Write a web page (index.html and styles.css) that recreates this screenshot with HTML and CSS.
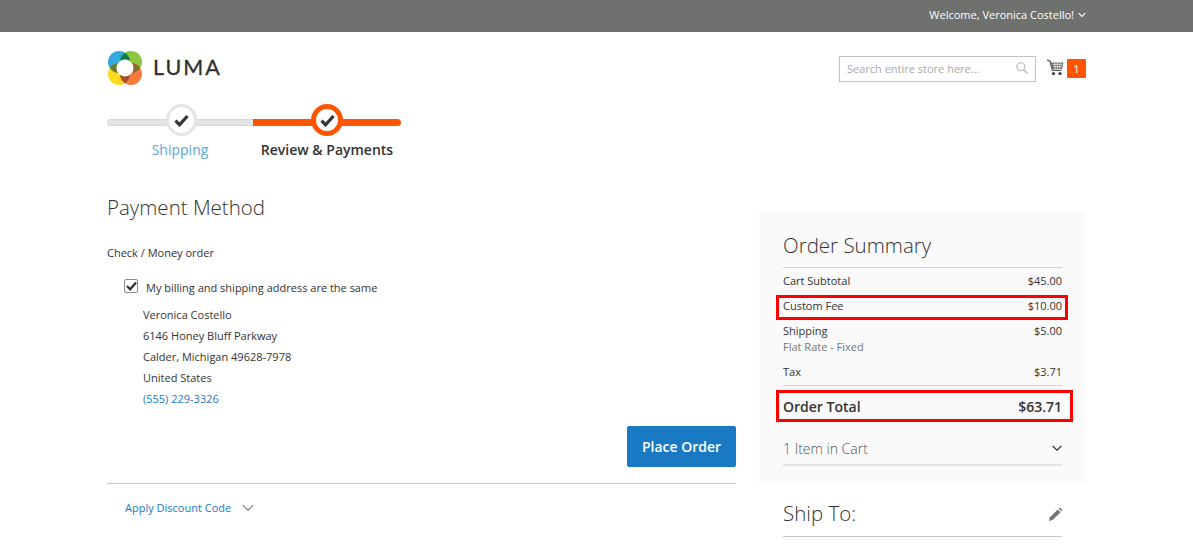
FILE: index.html
```html
<!DOCTYPE html>
<html lang="en">
<head>
<meta charset="utf-8">
<title>Checkout</title>
<link rel="stylesheet" href="styles.css">
</head>
<body>
<div class="topbar"><span class="welcome">Welcome, Veronica Costello!</span>
<svg class="welcome-caret" width="8" height="6" viewBox="0 0 8 6"><path d="M.7 1.200 4 4.400l3.300-3.200" fill="none" stroke="#fff" stroke-width="1.100"/></svg></div>
<header class="header">
  <div class="logo">
    <svg width="34" height="34" viewBox="0 0 34 34">
      <circle cx="11" cy="11" r="11" fill="#33a9e0"/>
      <circle cx="23" cy="11" r="11" fill="#8cc63f"/>
      <circle cx="11" cy="23" r="11" fill="#fbdc1e"/>
      <circle cx="23" cy="23" r="11" fill="#f97b3c"/>
      <path d="M17 1.780A11 11 0 0 1 17 20.220 11 11 0 0 1 17 1.780Z" fill="#0e7d45"/>
      <path d="M17 13.780A11 11 0 0 1 17 32.220 11 11 0 0 1 17 13.780Z" fill="#a3502a"/>
      <path d="M1.780 17A11 11 0 0 1 20.220 17 11 11 0 0 1 1.780 17Z" fill="#6b7a33"/>
      <path d="M13.780 17A11 11 0 0 1 32.220 17 11 11 0 0 1 13.780 17Z" fill="#8a6b33"/>
      <circle cx="17" cy="17" r="8.500" fill="#fff"/>
    </svg>
    <span class="logo-text">LUMA</span>
  </div>
  <div class="header-tools">
    <div class="search"><span>Search entire store here...</span>
      <svg width="12" height="12" viewBox="0 0 12 12"><circle cx="4.800" cy="4.800" r="4" fill="none" stroke="#b5b5b5" stroke-width="1.100"/><path d="m7.800 7.800 3.700 3.700" stroke="#b5b5b5" stroke-width="1.500"/></svg>
    </div>
    <div class="cart">
      <svg width="17" height="17" viewBox="0 0 17 17"><path d="M0 1.200 3 2l2.400 9.400h9.200" fill="none" stroke="#55585a" stroke-width="1.300"/><path d="M3.900 3.600h12.600l-1.500 6.400H5.300Z" fill="#6d7072"/><path d="M5.500 5.400h10M6 7.600h9M7.700 3.600l.6 6.400M10.400 3.600v6.400M13.100 3.600l-.6 6.400" stroke="#fff" stroke-width=".6"/><circle cx="6.500" cy="14.600" r="1.700" fill="#44484a"/><circle cx="13" cy="14.600" r="1.700" fill="#44484a"/></svg>
      <span class="counter">1</span>
    </div>
  </div>
</header>
<ul class="steps">
  <li class="step step-done">
    <span class="step-dot"><svg width="15" height="13" viewBox="0 0 14 12"><path d="M1.400 6.200 5.200 10 12.600 1.800" fill="none" stroke="#333" stroke-width="3"/></svg></span>
    <span class="step-label">Shipping</span>
  </li>
  <li class="step step-active">
    <span class="step-dot"><svg width="15" height="13" viewBox="0 0 14 12"><path d="M1.400 6.200 5.200 10 12.600 1.800" fill="none" stroke="#333" stroke-width="3"/></svg></span>
    <span class="step-label">Review &amp; Payments</span>
  </li>
</ul>
<main class="checkout">
  <section class="payment">
    <h2 class="payment-title">Payment Method</h2>
    <div class="method">Check / Money order</div>
    <label class="same-address">
      <span class="checkbox"><svg width="11" height="10" viewBox="0 0 11 10"><path d="M1 5 4.200 8.200 10 1.400" fill="none" stroke="#333" stroke-width="2.300"/></svg></span>
      My billing and shipping address are the same
    </label>
    <address class="address">
      <div>Veronica Costello</div>
      <div>6146 Honey Bluff Parkway</div>
      <div>Calder, Michigan 49628-7978</div>
      <div>United States</div>
      <div class="link">(555) 229-3326</div>
    </address>
    <div class="actions"><button class="place-order" type="button">Place Order</button></div>
    <div class="discount"><span class="link">Apply Discount Code</span>
      <svg width="12" height="8" viewBox="0 0 12 8"><path d="M.8 1.200 6 6.200l5.200-5" fill="none" stroke="#757575" stroke-width="1.100"/></svg>
    </div>
  </section>
  <aside class="sidebar">
    <div class="summary">
      <h2 class="summary-title">Order Summary</h2>
      <div class="rows">
        <div class="row row-subtotal"><span>Cart Subtotal</span><span>$45.00</span></div>
        <div class="row row-fee"><span>Custom Fee</span><span>$10.00</span></div>
        <div class="row row-shipping"><span>Shipping<small>Flat Rate - Fixed</small></span><span>$5.00</span></div>
        <div class="row row-tax"><span>Tax</span><span>$3.71</span></div>
        <div class="row row-total"><span>Order Total</span><span>$63.71</span></div>
      </div>
      <div class="items"><span>1 Item in Cart</span>
        <svg width="10" height="7" viewBox="0 0 10 7"><path d="M.7 1 5 5.200 9.300 1" fill="none" stroke="#333" stroke-width="1.200"/></svg>
      </div>
    </div>
    <div class="ship-to">
      <h2 class="ship-title">Ship To:</h2>
      <svg class="edit-icon" width="13" height="13" viewBox="0 0 13 13"><path d="M0 13l.9-3.700L8.800 1.400l2.800 2.800-7.900 7.900Z" fill="#757575"/><path d="M9.600.6 10.200 0a1 1 0 0 1 1.300 0l1.500 1.500a1 1 0 0 1 0 1.300l-.6.600Z" fill="#757575"/></svg>
    </div>
  </aside>
</main>
</body>
</html>
```

FILE: styles.css
```css
*, *::before, *::after { box-sizing: border-box; }
html, body { margin: 0; padding: 0; height: 552px; overflow: hidden; }
body { font-family: "Open Sans", sans-serif; font-size: 11px; color: #333; background: #fff; }
h2, ul, address { margin: 0; padding: 0; font-style: normal; }
.link { color: #1979c3; }

.topbar { height: 32px; background: #6e716e; color: #fff; display: flex; align-items: center; justify-content: flex-end; gap: 4px; padding-right: 107px; font-size: 11px; padding-bottom: 3px; }

.header { display: flex; justify-content: space-between; padding: 17px 107px 0; height: 71px; }
.logo { display: flex; align-items: flex-start; gap: 11px; margin: 2px 0 0 1px; }
.logo-text { font-family: "Lato", sans-serif; font-size: 21.500px; line-height: 32px; letter-spacing: 2px; color: #2f2f2f; font-weight: 400; -webkit-text-stroke: .3px #2f2f2f; }
.header-tools { display: flex; align-items: flex-start; padding-top: 7px; gap: 11px; }
.search { width: 197px; height: 26px; border: 1px solid #c2c2c2; display: flex; align-items: center; justify-content: space-between; padding: 0 7px 2px; color: #a9a9a9; font-size: 11px; }
.cart { display: flex; align-items: flex-start; gap: 3px; margin-top: 3px; }
.counter { width: 19px; height: 19px; background: #ff5501; color: #fff; text-align: center; line-height: 19px; font-size: 11px; border-radius: 1px; }

.steps { list-style: none; display: flex; margin-left: 107px; width: 294px; }
.step { width: 146px; height: 57px; position: relative; display: flex; flex-direction: column; align-items: center; padding-top: 37px; }
.step::before { content: ""; position: absolute; top: 16px; left: 0; right: 0; height: 7px; background: #e4e4e4; border: 1px solid #d9d9d9; border-right: 0; border-radius: 4px 0 0 4px; }
.step-active { width: 148px; }
.step-active::before { background: #ff5501; border: 0; border-radius: 0 4px 4px 0; }
.step-dot { position: absolute; top: 1px; width: 32px; height: 32px; border-radius: 50%; background: #fff; border: 3px solid #e4e4e4; display: flex; align-items: center; justify-content: center; }
.step-done .step-dot { left: 59px; width: 31px; }
.step-active .step-dot { border: 5px solid #ff5501; left: 58px; }
.step-label { font-size: 14px; line-height: 20px; color: #5ea6dd; position: relative; }
.step-active .step-label { font-weight: 600; color: #333; }

.checkout { display: flex; justify-content: space-between; padding: 0 108px 0 107px; margin-top: 31px; }
.payment { width: 629px; }
.payment-title { font-weight: 300; font-size: 20.500px; line-height: 28px; color: #333; margin-top: 2px; }
.method { margin-top: 23px; line-height: 18px; }
.same-address { display: flex; align-items: center; margin: 16px 0 0 17px; height: 18px; gap: 8px; }
.checkbox { width: 14px; height: 14px; border: 1px solid #8a8a8a; border-radius: 2px; display: flex; align-items: center; justify-content: center; margin-top: -2px; }
.address { margin: 8px 0 0 36px; line-height: 21px; }
.actions { display: flex; justify-content: flex-end; margin-top: 17px; }
.place-order { width: 109px; height: 41px; background: #1979c3; border: 1px solid #1979c3; border-radius: 2px; color: #fff; font-family: inherit; font-size: 14px; font-weight: 600; padding: 0; }
.discount { margin-top: 16px; border-top: 1px solid #c6c6c6; padding: 15px 0 0 18px; display: flex; align-items: center; gap: 11px; line-height: 18px; }

.sidebar { width: 326px; margin-top: 21px; }
.summary { background: #fafafa; padding: 18px 23px 0 24px; height: 271px; }
.summary-title { font-weight: 300; font-size: 20.500px; line-height: 30px; padding-bottom: 7px; border-bottom: 1px solid #d1d1d1; }
.row { display: flex; justify-content: space-between; line-height: 16px; position: relative; }
.row small { display: block; font-size: 11px; color: #757575; line-height: 16px; }
.row-subtotal { padding-top: 5px; height: 25px; }
.row-fee { height: 25px; padding-top: 5px; }
.row-fee::after, .row-total::after { content: ""; position: absolute; border: 3px solid #f00; }
.row-fee::after { left: -7px; right: -6px; top: 2px; height: 25px; }
.row-shipping { height: 41px; padding-top: 5px; }
.row-tax { height: 27px; padding-top: 5px; border-bottom: 1px solid #d1d1d1; }
.row-total { height: 42px; align-items: center; font-size: 14px; font-weight: 600; }
.row-total::after { left: -7px; right: -11px; top: 4px; height: 32px; }
.items { display: flex; justify-content: space-between; align-items: center; height: 38px; font-size: 14px; color: #4d5660; border-bottom: 2px solid #e4e4e4; padding-top: 4px; font-weight: 300; }
.ship-to { margin: 7px 23px 0 24px; height: 47px; border-bottom: 1px solid #c8c8c8; display: flex; justify-content: space-between; align-items: center; }
.ship-title { font-weight: 300; font-size: 20.500px; line-height: 30px; }
.edit-icon { margin-top: 3px; }
```
